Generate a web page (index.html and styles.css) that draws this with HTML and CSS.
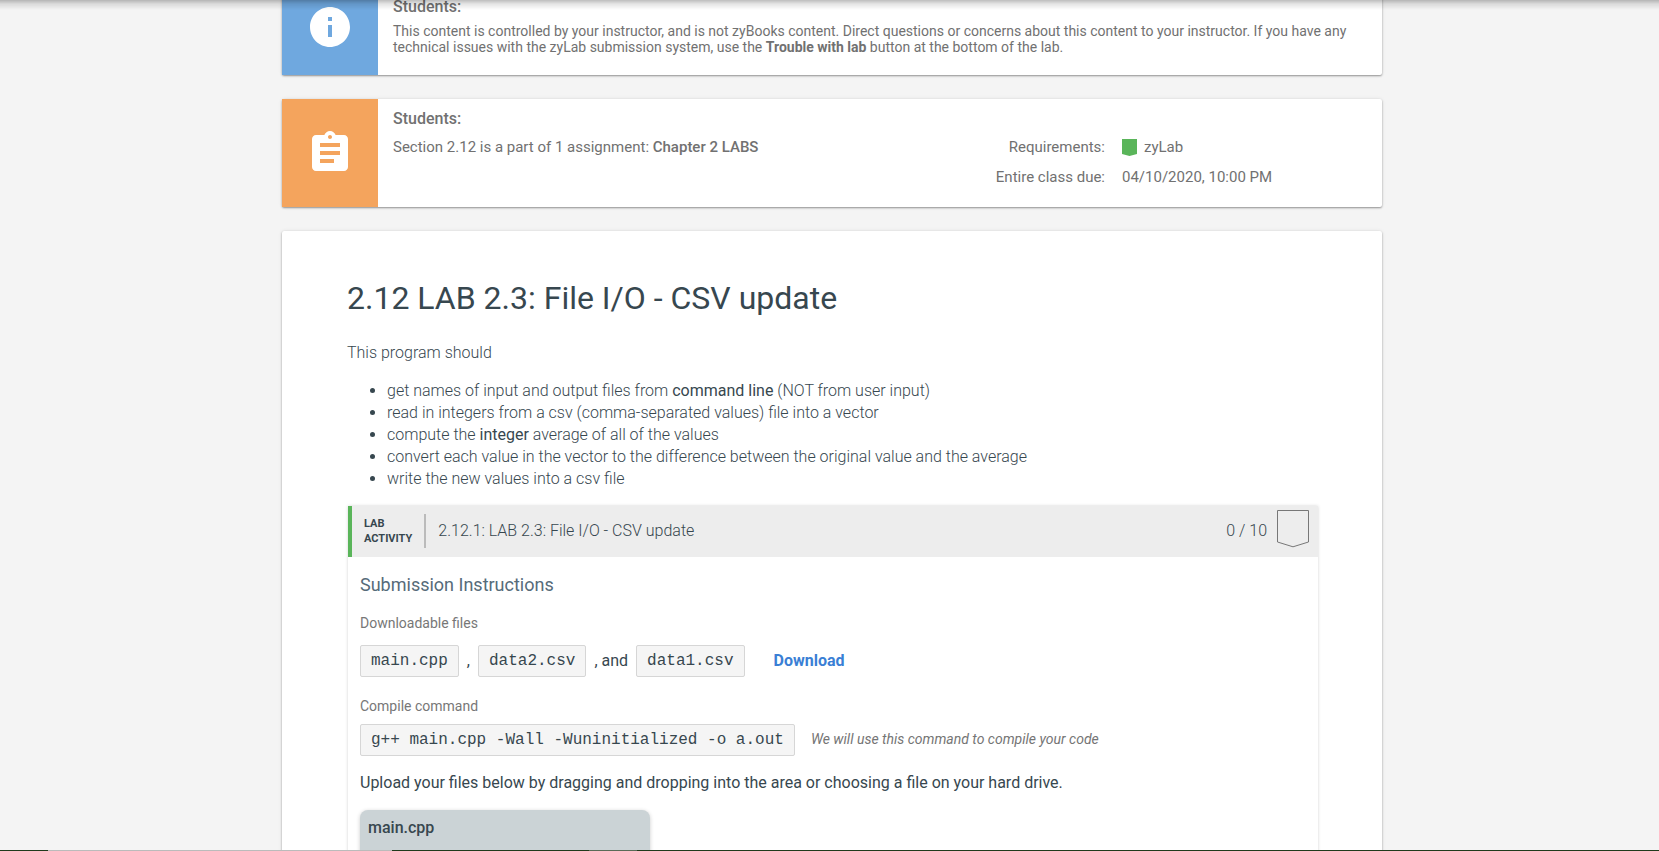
FILE: index.html
```html
<!DOCTYPE html>
<html lang="en">
<head>
<meta charset="utf-8">
<title>2.12 LAB 2.3: File I/O - CSV update</title>
<link rel="stylesheet" href="styles.css">
</head>
<body>
<div class="top-shadow"></div>
<main class="page">
  <section class="card notice notice-info">
    <div class="notice-side side-blue">
      <svg width="48" height="48" viewBox="0 0 24 24" fill="#fff" aria-hidden="true"><path d="M12 2C6.48 2 2 6.48 2 12s4.48 10 10 10 10-4.48 10-10S17.52 2 12 2zm1 15h-2v-6h2v6zm0-8h-2V7h2v2z"/></svg>
    </div>
    <div class="notice-body">
      <h2 class="notice-title">Students:</h2>
      <p class="notice-small">This content is controlled by your instructor, and is not zyBooks content. Direct questions or concerns about this content to your instructor. If you have any technical issues with the zyLab submission system, use the <b>Trouble with lab</b> button at the bottom of the lab.</p>
    </div>
  </section>

  <section class="card notice notice-assignment">
    <div class="notice-side side-orange">
      <svg width="48" height="48" viewBox="0 0 24 24" fill="#fff" aria-hidden="true"><path d="M19 3h-4.180C14.400 1.840 13.300 1 12 1c-1.300 0-2.400.84-2.820 2H5c-1.100 0-2 .9-2 2v14c0 1.100.9 2 2 2h14c1.100 0 2-.9 2-2V5c0-1.100-.9-2-2-2zm-7 0c.55 0 1 .45 1 1s-.45 1-1 1-1-.45-1-1 .45-1 1-1zm2 14H7v-2h7v2zm3-4H7v-2h10v2zm0-4H7V7h10v2z"/></svg>
    </div>
    <div class="notice-body">
      <h2 class="notice-title">Students:</h2>
      <div class="assignment">
        <p class="assignment-name">Section 2.12 is a part of 1 assignment: <b>Chapter 2 LABS</b></p>
        <dl class="facts">
          <dt>Requirements:</dt>
          <dd class="requirement"><svg width="15" height="17" viewBox="0 0 15 17" aria-hidden="true"><path d="M0 0h15v15l-7.500 2L0 15z" fill="#5ab55a"/></svg>zyLab</dd>
          <dt>Entire class due:</dt>
          <dd>04/10/2020, 10:00 PM</dd>
        </dl>
      </div>
    </div>
  </section>

  <article class="card section">
    <h1 class="section-title">2.12 LAB 2.3: File I/O - CSV update</h1>
    <p class="intro">This program should</p>
    <ul class="steps">
      <li>get names of input and output files from <b>command line</b> (NOT from user input)</li>
      <li>read in integers from a csv (comma-separated values) file into a vector</li>
      <li>compute the <b>integer</b> average of all of the values</li>
      <li>convert each value in the vector to the difference between the original value and the average</li>
      <li>write the new values into a csv file</li>
    </ul>

    <section class="lab">
      <header class="lab-header">
        <div class="lab-kind">LAB<br>ACTIVITY</div>
        <h2 class="lab-title">2.12.1: LAB 2.3: File I/O - CSV update</h2>
        <span class="lab-score">0 / 10</span>
        <svg class="lab-badge" width="32" height="38" viewBox="0 0 32 38" aria-hidden="true"><path d="M.5 .5h31v31.500L16 36.800.5 32z" fill="none" stroke="#777"/></svg>
      </header>
      <div class="lab-body">
        <h3 class="lab-heading">Submission Instructions</h3>
        <p class="label">Downloadable files</p>
        <div class="files">
          <code class="code">main.cpp</code><span class="comma">,</span><code class="code">data2.csv</code><span class="comma">, and</span><code class="code">data1.csv</code>
          <a class="download" href="#">Download</a>
        </div>
        <p class="label label-compile">Compile command</p>
        <div class="compile">
          <code class="code">g++ main.cpp -Wall -Wuninitialized -o a.out</code>
          <em class="note">We will use this command to compile your code</em>
        </div>
        <p class="upload">Upload your files below by dragging and dropping into the area or choosing a file on your hard drive.</p>
        <div class="file-drop">main.cpp</div>
      </div>
    </section>
  </article>
</main>
<div class="bottom-edge"></div>
</body>
</html>
```
FILE: styles.css
```css
* { box-sizing: border-box; }

html, body { height: 100%; }

body {
  margin: 0;
  padding-left: 5px;
  overflow: hidden;
  background: #f4f4f4;
  color: #37474f;
  font: 16px/22px Roboto, "Liberation Sans", sans-serif;
}

h1, h2, h3, p, ul, dl, dd { margin: 0; font-weight: 400; }

.top-shadow {
  position: fixed;
  inset: 0 0 auto;
  height: 10px;
  z-index: 2;
  background: linear-gradient(rgba(0, 0, 0, .26), rgba(0, 0, 0, .1) 40%, rgba(0, 0, 0, 0));
}

.bottom-edge {
  position: fixed;
  inset: auto 0 0;
  height: 1px;
  z-index: 2;
  background: linear-gradient(90deg, #203a1c 48px, #bbb 48px 392px, #203a1c 392px 589px, #5a6b57 589px 637px, #203a1c 637px);
}

/* The first notice is partly scrolled past the top of the window. */
.page {
  display: flex;
  flex-direction: column;
  gap: 24px;
  max-width: 1100px;
  margin: -21px auto 0;
}

.card {
  background: #fff;
  border-radius: 2px;
  box-shadow: 0 1px 2px rgba(0, 0, 0, .38), 0 0 4px rgba(0, 0, 0, .08);
}

.notice { display: flex; color: #717171; }
.notice-info { min-height: 96px; }
.notice-assignment { min-height: 108px; }

.notice-side {
  flex: 0 0 96px;
  display: flex;
  align-items: center;
  justify-content: center;
}
.side-blue { background: #6fa8df; }
.side-orange { background: #f4a45d; }

.notice-body { flex: 1; padding: 10px 15px 0; }
.notice-info .notice-body { padding-top: 18px; }

.notice-title { font-size: 16px; line-height: 20px; font-weight: 500; }
.notice-small { margin-top: 6px; padding-right: 16px; font-size: 14px; line-height: 16px; }

.assignment {
  display: flex;
  margin-top: 8px;
  font-size: 15px;
  line-height: 20px;
}
.assignment-name { flex: 1; }
.assignment b { font-weight: 500; }
.facts { display: grid; grid-template-columns: auto 245px; gap: 10px 17px; }
.facts dt { text-align: right; }
.requirement { display: flex; gap: 7px; align-items: center; }

.section { padding: 48px 64px 40px 65px; }
.section-title { font-size: 32px; line-height: 38px; }
.intro { margin-top: 25px; font-weight: 300; }
.steps { margin: 16px 0; padding-left: 40px; font-weight: 300; }
.steps b { font-weight: 400; }

.lab { margin-left: 1px; box-shadow: 0 0 3px rgba(0, 0, 0, .18); }
.lab-header {
  display: flex;
  align-items: center;
  min-height: 51px;
  padding: 0 9px 2px 0;
  background: #ededed;
  border-left: 4px solid #5ab55a;
}
.lab-kind {
  padding: 2px 12px;
  border-right: 2px solid #bbb;
  font-size: 11px;
  line-height: 15px;
  font-weight: 700;
}
.lab-title { flex: 1; padding-left: 12px; font-size: 16px; font-weight: 300; }
.lab-score { font-weight: 300; }
.lab-badge { margin: 0 0 4px 10px; }

.lab-body { padding: 17px 12px 40px; }
.lab-heading { font-size: 18px; line-height: 22px; color: #566b79; }
.label { margin-top: 17px; font-size: 14px; line-height: 20px; color: #777; }
.files { display: flex; align-items: center; margin-top: 12px; }
.code {
  padding: 4px 10px;
  border: 1px solid #d6d6d6;
  border-radius: 2px;
  background: #f5f5f5;
  font: 16px/22px "Liberation Mono", monospace;
}
.comma { padding: 0 8px; }
.download { margin-left: 29px; color: #3a7fd5; font-weight: 700; text-decoration: none; }
.label-compile { margin-top: 19px; }
.compile { display: flex; align-items: center; margin-top: 8px; }
.note { margin-left: 16px; padding-bottom: 2px; font-size: 14px; color: #757575; }
.upload { margin-top: 16px; }
.file-drop {
  max-width: 290px;
  min-height: 80px;
  margin-top: 16px;
  padding: 7px 8px;
  border-radius: 8px;
  background: #cbd3d6;
  box-shadow: 0 1px 4px rgba(0, 0, 0, .2);
  font-weight: 500;
}
```
